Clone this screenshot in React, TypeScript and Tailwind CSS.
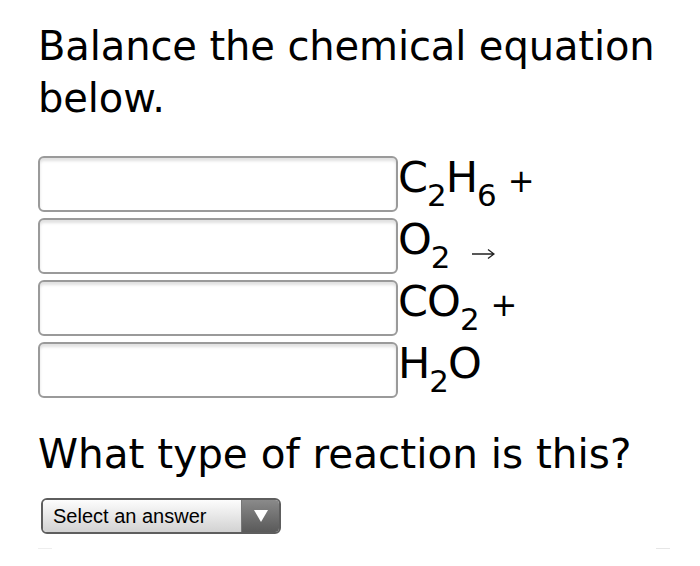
export default function App() {
  const sub = "text-[0.72em] align-[-0.2em] leading-none";
  const rows: { el: React.ReactNode; op: string }[] = [
    { el: <>C<sub className={sub}>2</sub>H<sub className={sub}>6</sub></>, op: "+" },
    { el: <>O<sub className={sub}>2</sub></>, op: "→" },
    { el: <>CO<sub className={sub}>2</sub></>, op: "+" },
    { el: <>H<sub className={sub}>2</sub>O</>, op: "" },
  ];

  return (
    <div className="w-[700px] h-[566px] bg-white text-black font-['DejaVu_Sans',sans-serif] px-[38px] pt-[20px]">
      <h1 className="text-[40px] leading-[52px] font-normal tracking-[-0.1px]">Balance the chemical equation below.</h1>

      <div className="mt-[32px] flex flex-col gap-[6px]">
        {rows.map((r, i) => (
          <div key={i} className="flex items-center h-[56px]">
            <input
              type="text"
              className="w-[360px] h-[56px] rounded-[6px] border-2 border-[#9a9a9a] bg-white shadow-[inset_0_3px_3px_rgba(0,0,0,0.12)] outline-none"
            />
            <div className="flex items-baseline text-[43px] leading-none whitespace-nowrap -mt-[8px] tracking-[-1px]">
              <span>{r.el}</span>
              {r.op === "+" && <span className="ml-[12px] text-[32px] tracking-normal">+</span>}
              {r.op === "→" && (
                <svg className="ml-[22px] self-center mt-[24px]" width="23" height="12" viewBox="0 0 23 12">
                  <path d="M0 6 H22 M16 1.5 L22 6 L16 10.5" stroke="#222" strokeWidth="1.3" fill="none" />
                </svg>
              )}
            </div>
          </div>
        ))}
      </div>

      <p className="mt-[30px] text-[40.5px] leading-[52px]">What type of reaction is this?</p>

      <div className="mt-[18px] ml-[3px] flex w-[240px] h-[36px] rounded-[6px] border-2 border-[#5e5e5e] overflow-hidden font-['Liberation_Sans',sans-serif]">
        <div className="flex-1 flex items-center pl-[10px] text-[20px] bg-gradient-to-b from-[#fdfdfd] to-[#d2d2d2]">
          Select an answer
        </div>
        <div className="w-[38px] flex items-center justify-center bg-gradient-to-b from-[#8a8a8a] to-[#5a5a5a] border-l border-[#777]">
          <svg width="14" height="12" viewBox="0 0 14 12">
            <path d="M0 0 H14 L7 12 Z" fill="#fff" />
          </svg>
        </div>
      </div>
      <div className="mt-[14px] flex justify-between">
        <div className="w-[14px] h-px bg-[#eee]" />
        <div className="w-[14px] h-px bg-[#e6e6e6] mr-[-8px]" />
      </div>
    </div>
  );
}
